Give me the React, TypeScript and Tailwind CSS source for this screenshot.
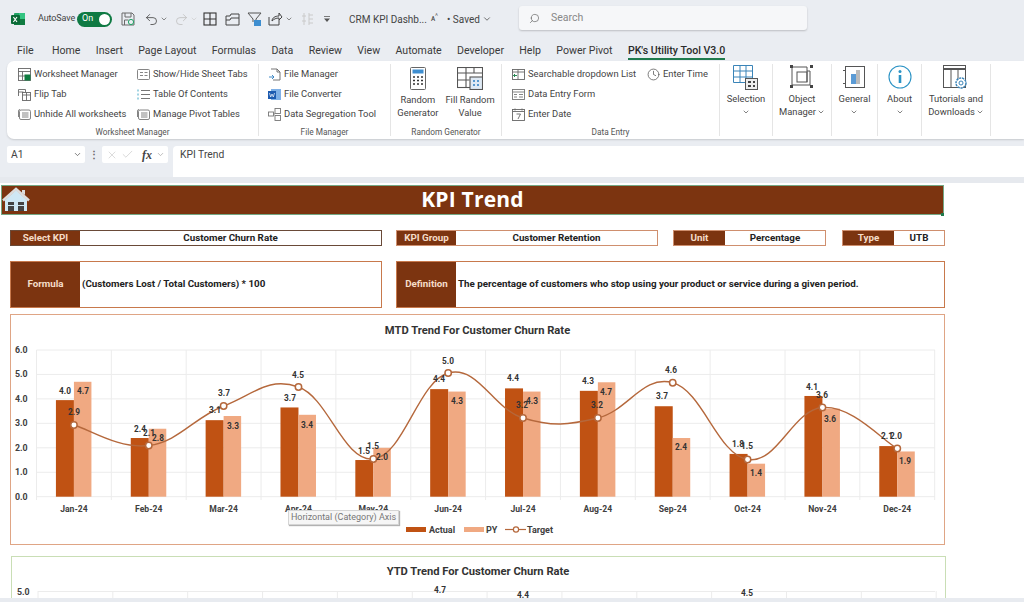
import type { ReactNode } from "react";
import { ChevronDown, Search, X, Check, Undo2, Redo2, Clock } from "lucide-react";

const sans = "font-['Roboto','Noto_Sans',sans-serif]";

const tabs = ["Home", "Insert", "Page Layout", "Formulas", "Data", "Review", "View", "Automate", "Developer", "Help", "Power Pivot"];

// page coordinates, the svg viewBox starts at the panel's top left corner
const months = [
  { m: "Jan-24", a: 3.95, p: 4.7, t: 425, labels: [["4.0", 65, 391], ["4.7", 83, 391], ["2.9", 74, 412]] },
  { m: "Feb-24", a: 2.4, p: 2.78, t: 445.5, labels: [["2.4", 140, 429], ["2.1", 149, 433], ["2.8", 158, 438]] },
  { m: "Mar-24", a: 3.13, p: 3.3, t: 406, labels: [["3.1", 215, 410], ["3.7", 224, 393], ["3.3", 233, 426]] },
  { m: "Apr-24", a: 3.65, p: 3.35, t: 387, labels: [["3.7", 290, 397.5], ["4.5", 298, 374.7], ["3.4", 307, 425]] },
  { m: "May-24", a: 1.5, p: 2.0, t: 459, labels: [["1.5", 364, 451], ["1.5", 373, 446], ["2.0", 382, 457]] },
  { m: "Jun-24", a: 4.4, p: 4.3, t: 373, labels: [["4.4", 439, 379], ["5.0", 448, 361], ["4.3", 457, 401]] },
  { m: "Jul-24", a: 4.43, p: 4.3, t: 418, labels: [["4.4", 513, 378], ["3.2", 522, 405], ["4.3", 532, 401]] },
  { m: "Aug-24", a: 4.33, p: 4.68, t: 418, labels: [["4.3", 588, 381], ["3.2", 597, 405], ["4.7", 606, 392]] },
  { m: "Sep-24", a: 3.7, p: 2.4, t: 382.7, labels: [["3.7", 662, 396], ["4.6", 671, 370], ["2.4", 681, 447]] },
  { m: "Oct-24", a: 1.75, p: 1.35, t: 459.5, labels: [["1.8", 738, 444], ["1.5", 747, 446], ["1.4", 756, 473]] },
  { m: "Nov-24", a: 4.12, p: 3.6, t: 407.5, labels: [["4.1", 812, 387], ["3.6", 822, 394.7], ["3.6", 830, 419]] },
  { m: "Dec-24", a: 2.07, p: 1.85, t: 448.5, labels: [["2.1", 887, 436], ["2.0", 896, 436], ["1.9", 905, 461]] },
];

const left = 36.5;
const catW = 74.85;
const y0 = 496.7;
const unit = 24.45;
const cx = (i: number) => left + catW * (i + 0.5);

function smoothPath(pts: number[][]) {
  let d = `M${pts[0][0]} ${pts[0][1]}`;
  for (let i = 0; i < pts.length - 1; i++) {
    const p0 = pts[Math.max(i - 1, 0)];
    const p1 = pts[i];
    const p2 = pts[i + 1];
    const p3 = pts[Math.min(i + 2, pts.length - 1)];
    const k = 0.2;
    d += ` C${p1[0] + (p2[0] - p0[0]) * k} ${p1[1] + (p2[1] - p0[1]) * k} ${p2[0] - (p3[0] - p1[0]) * k} ${p2[1] - (p3[1] - p1[1]) * k} ${p2[0]} ${p2[1]}`;
  }
  return d;
}

function MtdChart() {
  const pts = months.map((d, i) => [cx(i), d.t]);
  return (
    <svg viewBox="11 315 933 229" className={`block w-[933px] h-[229px] ${sans}`}>
      <text x="477.5" y="334" textAnchor="middle" fontSize="11.2" fontWeight="700" fill="#333">MTD Trend For Customer Churn Rate</text>
      {[0, 1, 2, 3, 4, 5, 6].map((v) => (
        <g key={v}>
          <line x1={left} x2={935} y1={y0 - v * unit} y2={y0 - v * unit} stroke="#ececec" />
          <text x="15" y={y0 - v * unit + 3} fontSize="8.8" fontWeight="700" fill="#404040">{v.toFixed(1)}</text>
        </g>
      ))}
      {[...Array(13).keys()].map((i) => (
        <line key={i} x1={left + catW * i} x2={left + catW * i} y1={350} y2={500} stroke="#ececec" />
      ))}
      {months.map((d, i) => (
        <g key={d.m}>
          <rect x={cx(i) - 18} y={y0 - d.a * unit} width="18" height={d.a * unit} fill="#c05213" />
          <rect x={cx(i)} y={y0 - d.p * unit} width="17.5" height={d.p * unit} fill="#f0a982" />
          <text x={cx(i)} y="512" textAnchor="middle" fontSize="8.6" fontWeight="700" fill="#404040">{d.m}</text>
        </g>
      ))}
      <path d={smoothPath(pts)} fill="none" stroke="#b5683c" strokeWidth="1.4" />
      {pts.map((p, i) => (
        <circle key={i} cx={p[0]} cy={p[1]} r="3.2" fill="#fff" stroke="#b5683c" strokeWidth="1.5" />
      ))}
      {months.flatMap((d) =>
        d.labels.map((l, j) => (
          <text key={d.m + j} x={l[1]} y={(l[2] as number) + 3} textAnchor="middle" fontSize="8.3" fontWeight="700" fill="#333">{l[0]}</text>
        ))
      )}
      <rect x="406" y="527" width="20" height="5" fill="#c05213" />
      <text x="429" y="532.5" fontSize="9" fontWeight="700" fill="#404040">Actual</text>
      <rect x="464" y="527" width="20" height="5" fill="#f0a982" />
      <text x="486" y="532.5" fontSize="9" fontWeight="700" fill="#404040">PY</text>
      <line x1="505" x2="526" y1="529.5" y2="529.5" stroke="#b5683c" strokeWidth="1.2" />
      <circle cx="516" cy="529.5" r="2.6" fill="#fff" stroke="#b5683c" strokeWidth="1.2" />
      <text x="527" y="532.5" fontSize="9" fontWeight="700" fill="#404040">Target</text>
    </svg>
  );
}

function YtdChart() {
  return (
    <svg viewBox="12 557 933 60" className={`block w-[933px] h-[60px] ${sans}`}>
      <text x="478" y="575" textAnchor="middle" fontSize="11.2" fontWeight="700" fill="#333">YTD Trend For Customer Churn Rate</text>
      <line x1={38} x2={935} y1="591.5" y2="591.5" stroke="#ececec" />
      {[...Array(13).keys()].map((i) => (
        <line key={i} x1={38 + catW * i} x2={38 + catW * i} y1={591} y2={617} stroke="#ececec" />
      ))}
      <text x="17" y="594.5" fontSize="8.8" fontWeight="700" fill="#404040">5.0</text>
      <text x="440" y="593" textAnchor="middle" fontSize="8.3" fontWeight="700" fill="#333">4.7</text>
      <text x="523" y="597.5" textAnchor="middle" fontSize="8.3" fontWeight="700" fill="#333">4.4</text>
      <text x="747" y="596" textAnchor="middle" fontSize="8.3" fontWeight="700" fill="#333">4.5</text>
    </svg>
  );
}

function ExcelLogo() {
  return (
    <svg viewBox="0 0 14 14" className="w-[14px] h-[14px]">
      <rect x="3" y="1" width="11" height="12" rx="1" fill="#21a366" />
      <rect x="8" y="1" width="6" height="6" fill="#33c481" />
      <rect x="3" y="7" width="11" height="6" fill="#107c41" />
      <rect x="0" y="3" width="9" height="9" rx="1" fill="#0b6a37" />
      <path d="M2.4 5l3.6 5M6 5l-3.6 5" stroke="#fff" strokeWidth="1.1" />
    </svg>
  );
}

function QatGrid() {
  return (
    <svg viewBox="0 0 14 14" className="w-[14px] h-[14px]" fill="none" stroke="#333" strokeWidth="1.1">
      <rect x="1" y="1" width="12" height="12" />
      <path d="M7 1v12M1 7h12" />
    </svg>
  );
}

function TitleBar() {
  return (
    <div className="h-[36px] flex items-center pl-[11px] pt-[2px] text-[#444]">
      <ExcelLogo />
      <span className="ml-[13px] w-[34px] text-[9px] tracking-[-0.1px] whitespace-nowrap">AutoSave</span>
      <span className="ml-[5px] w-[35px] h-[15px] rounded-full bg-[#0f7a43] flex items-center justify-between pl-[5px] pr-[2px] text-white text-[9px]">
        On
        <span className="w-[11px] h-[11px] rounded-full bg-white" />
      </span>
      <svg viewBox="0 0 14 14" className="ml-[9px] w-[14px] h-[14px]" fill="none" stroke="#6a6a6a" strokeWidth="1">
        <path d="M1 1h10l2 2v10H1z" />
        <path d="M4 1v4h6V1M3.5 13V8h4" />
        <circle cx="10" cy="10" r="2.6" stroke="#21a366" />
      </svg>
      <Undo2 className="ml-[9px] w-[15px] h-[15px] text-[#505050]" strokeWidth={1.4} />
      <ChevronDown className="ml-[1px] w-[8px] h-[8px] text-[#555]" />
      <Redo2 className="ml-[6px] w-[15px] h-[15px] text-[#c2c2c2]" strokeWidth={1.4} />
      <ChevronDown className="ml-[1px] w-[8px] h-[8px] text-[#ccc]" />
      <span className="ml-[5px]"><QatGrid /></span>
      <svg viewBox="0 0 15 13" className="ml-[8px] w-[15px] h-[13px]" fill="none" stroke="#444" strokeWidth="1">
        <path d="M1 12V3h4l1-2h8v11z" />
        <path d="M1 7h4l1-2h8" />
      </svg>
      <svg viewBox="0 0 15 15" className="ml-[7px] w-[15px] h-[15px]" fill="none" stroke="#555" strokeWidth="1">
        <path d="M1 1h13L9 7v4" />
        <path d="M1 1l5 6v3" />
        <rect x="7" y="8" width="7" height="6" fill="#3e8ed0" stroke="none" />
      </svg>
      <svg viewBox="0 0 15 14" className="ml-[6px] w-[15px] h-[14px]" fill="none" stroke="#444" strokeWidth="1">
        <path d="M1 5v8h10V8" />
        <path d="M4 9c0-3 3-5 7-5V1l3 4-3 3V6c-3 0-5 1-7 3z" />
      </svg>
      <ChevronDown className="ml-[2px] w-[8px] h-[8px] text-[#555]" />
      <svg viewBox="0 0 13 14" className="ml-[8px] w-[13px] h-[14px]" fill="none" stroke="#cacaca" strokeWidth="1">
        <path d="M3 1v12M1 4h4M1 9h4M8 1v12M8 3h4M8 7h4M8 11h4" />
      </svg>
      <svg viewBox="0 0 8 8" className="ml-[9px] w-[8px] h-[8px]" fill="#555">
        <path d="M1 1h6v.8H1zM1 3.5h6L4 7z" />
      </svg>
      <span className="ml-[18px] w-[71px] text-[10px] whitespace-nowrap">CRM KPI Dashb...</span>
      <span className="ml-[11px] w-[10px] text-[8px] leading-none">ᴀ<sup>ᴬ</sup></span>
      <span className="ml-[6px] w-[34px] text-[10px] whitespace-nowrap">• Saved</span>
      <ChevronDown className="ml-[1px] w-[10px] h-[10px] text-[#555]" />
      <div className="ml-[27px] w-[288px] h-[24px] -mt-[2px] bg-[#f6f7f9] rounded-[3px] shadow-[0_1px_2px_rgba(0,0,0,0.2)] flex items-center pl-[10px] text-[10.5px] text-[#888]">
        <Search className="w-[11px] h-[11px] -scale-x-100 text-[#666]" strokeWidth={1.5} />
        <span className="ml-[11px]">Search</span>
      </div>
    </div>
  );
}

function TabRow() {
  return (
    <div className="h-[25px] flex items-center gap-[15.3px] pl-[17px] pt-[4px] text-[10.6px] text-[#3a3a3a]">
      <span className="mr-[3px]">File</span>
      {tabs.map((t) => (
        <span key={t}>{t}</span>
      ))}
      <span className="relative font-medium text-[#2b2b2b]">
        PK's Utility Tool V3.0
        <span className="absolute left-0 right-0 -bottom-[2px] h-[2px] bg-[#1f7a4d]" />
      </span>
    </div>
  );
}

function MiniIcon({ kind }: { kind: string }) {
  if (kind === "word") {
    return (
      <svg viewBox="0 0 13 13" className="w-[13px] h-[13px] shrink-0">
        <rect x="3" y="1" width="10" height="11" fill="#7fb0e6" />
        <rect x="0" y="3" width="8" height="8" fill="#1d5bb0" />
        <path d="M1.5 5l1.2 4 1.3-3 1.3 3 1.2-4" stroke="#fff" strokeWidth=".7" fill="none" />
      </svg>
    );
  }
  if (kind === "file") {
    return (
      <svg viewBox="0 0 13 13" className="w-[13px] h-[13px] shrink-0" fill="none" stroke="#666" strokeWidth=".9">
        <path d="M3 1h6l3 3v8H5M9 1v3h3" />
        <path d="M1 9h5M4 7l2 2-2 2" stroke="#2f7fc1" />
      </svg>
    );
  }
  if (kind === "list") {
    return (
      <svg viewBox="0 0 13 13" className="w-[13px] h-[13px] shrink-0" fill="none" stroke="#666" strokeWidth=".9">
        <path d="M4 2.5h9M4 6.5h9M4 10.5h9" />
        <path d="M1 1.5v2M1 5.5v2M1 9.5v2" stroke="#2f9fc1" />
      </svg>
    );
  }
  if (kind === "sheet") {
    return (
      <svg viewBox="0 0 13 13" className="w-[13px] h-[13px] shrink-0" fill="none" stroke="#666" strokeWidth=".9">
        <rect x=".5" y=".5" width="12" height="12" />
        <path d="M.5 3.5h12M4.5 3.5v9M.5 8h7" />
        <rect x="6.5" y="6.5" width="6" height="6" fill="#107c41" stroke="none" />
      </svg>
    );
  }
  if (kind === "flip") {
    return (
      <svg viewBox="0 0 13 13" className="w-[13px] h-[13px] shrink-0" fill="none" stroke="#666" strokeWidth=".9">
        <path d="M.5 8V1.5h7V4M.5 4h5" />
        <rect x="4.5" y="4.5" width="8" height="8" />
        <path d="M4.5 7h8M8.5 4.5v8" />
      </svg>
    );
  }
  if (kind === "tabs") {
    return (
      <svg viewBox="0 0 13 13" className="w-[13px] h-[13px] shrink-0" fill="none" stroke="#777" strokeWidth=".9">
        <rect x=".5" y="1.5" width="12" height="10" rx="1" />
        <path d="M3 4.5h3M7.5 4.5h3M3 7.5h3M7.5 7.5h3" />
      </svg>
    );
  }
  if (kind === "seg") {
    return (
      <svg viewBox="0 0 13 13" className="w-[13px] h-[13px] shrink-0" fill="none" stroke="#777" strokeWidth=".9">
        <rect x="7" y=".5" width="5.5" height="5" />
        <rect x=".5" y="4" width="5" height="4" />
        <rect x="7" y="7.5" width="5.5" height="5" />
        <path d="M5.5 6H7" />
      </svg>
    );
  }
  if (kind === "form") {
    return (
      <svg viewBox="0 0 13 13" className="w-[13px] h-[13px] shrink-0" fill="none" stroke="#777" strokeWidth=".9">
        <rect x=".5" y="1.5" width="12" height="10" />
        <path d="M.5 4h12M2 6.5h3M2 9h3M7 6.5h4M7 9h4" />
      </svg>
    );
  }
  if (kind === "date") {
    return (
      <svg viewBox="0 0 13 13" className="w-[13px] h-[13px] shrink-0" fill="none" stroke="#666" strokeWidth=".9">
        <rect x=".5" y="1.5" width="12" height="11" />
        <path d="M.5 3.5h12M3 .5v2M10 .5v2M4.5 6h4l-2.5 5" />
      </svg>
    );
  }
  if (kind === "dropdown") {
    return (
      <svg viewBox="0 0 13 13" className="w-[13px] h-[13px] shrink-0" fill="none" stroke="#666" strokeWidth=".9">
        <rect x=".5" y="1.5" width="12" height="10" />
        <path d="M.5 4h12M6 1.5v10" />
        <path d="M5 7.5H1.5M3 6L1.5 7.5 3 9" stroke="#107c41" />
      </svg>
    );
  }
  // pivot / unhide style, a rounded panel with lines
  return (
    <svg viewBox="0 0 13 13" className="w-[13px] h-[13px] shrink-0" fill="none" stroke="#777" strokeWidth=".9">
      <rect x="1.5" y="2" width="11" height="9.5" rx="1.5" />
      <path d="M.5 9V3a1.5 1.5 0 0 1 1.5-1.5M4 5h6.5M4 7h6.5M4 9h6.5" />
    </svg>
  );
}

function RibbonItem({ kind, label, className }: { kind: string; label: string; className?: string }) {
  return (
    <div className={`flex items-center gap-[3px] h-[20px] whitespace-nowrap ${className ?? ""}`}>
      <MiniIcon kind={kind} />
      <span>{label}</span>
    </div>
  );
}

function GroupLabel({ children }: { children: string }) {
  return <div className="absolute -bottom-[2px] left-0 right-0 text-center text-[8.3px] text-[#555]">{children}</div>;
}

function TallButton({ label, icon, caret }: { label: string[]; icon: ReactNode; caret?: boolean }) {
  return (
    <div className="flex flex-col items-center text-center leading-[12.5px]">
      <div className="h-[26px] flex items-center">{icon}</div>
      <div className="mt-[3px]">
        {label.map((l, i) => (
          <div key={l} className="flex items-center justify-center whitespace-nowrap">
            {l}
            {caret && i === label.length - 1 && <ChevronDown className="ml-[1px] w-[8px] h-[8px]" />}
          </div>
        ))}
        {!caret && (
          <div className="flex justify-center">
            <ChevronDown className="w-[8px] h-[8px] mt-[2px]" />
          </div>
        )}
      </div>
    </div>
  );
}

function Ribbon() {
  return (
    <div className="ml-[7px] h-[78px] bg-white rounded-l-[7px] shadow-[0_1px_2px_rgba(0,0,0,0.15)] flex text-[9.4px] text-[#444]">
      <div className="relative w-[252px] shrink-0 border-r border-[#e5e5e5] my-[3px] pl-[11px] flex gap-[2px]">
        <div className="w-[117px]">
          <RibbonItem kind="sheet" label="Worksheet Manager" />
          <RibbonItem kind="flip" label="Flip Tab" />
          <RibbonItem kind="stack" label="Unhide All worksheets" />
        </div>
        <div>
          <RibbonItem kind="tabs" label="Show/Hide Sheet Tabs" />
          <RibbonItem kind="list" label="Table Of Contents" />
          <RibbonItem kind="stack" label="Manage Pivot Tables" />
        </div>
        <GroupLabel>Worksheet Manager</GroupLabel>
      </div>
      <div className="relative w-[132px] shrink-0 border-r border-[#e5e5e5] my-[3px] pl-[9px]">
        <RibbonItem kind="file" label="File Manager" />
        <RibbonItem kind="word" label="File Converter" />
        <RibbonItem kind="seg" label="Data Segregation Tool" />
        <GroupLabel>File Manager</GroupLabel>
      </div>
      <div className="relative w-[111px] shrink-0 border-r border-[#e5e5e5] my-[3px] pt-[3px] flex justify-center gap-[7px] leading-[12.5px]">
        <div className="flex flex-col items-center">
          <svg viewBox="0 0 16 23" className="w-[16px] h-[23px]" fill="none" stroke="#666" strokeWidth="1">
            <rect x=".5" y=".5" width="15" height="22" rx="1" />
            <rect x="2.5" y="2.5" width="11" height="4" fill="#3e8ed0" stroke="none" />
            <path d="M3 10h2M7 10h2M11 10h2M3 13.5h2M7 13.5h2M11 13.5h2M3 17h2M7 17h2M11 17h2" stroke="#333" strokeWidth="1.5" />
          </svg>
          <div className="mt-[4px] text-center">Random<br />Generator</div>
        </div>
        <div className="flex flex-col items-center">
          <svg viewBox="0 0 26 23" className="w-[26px] h-[23px]" fill="none" stroke="#555" strokeWidth="1.1">
            <rect x=".5" y=".5" width="25" height="20" />
            <path d="M.5 6h25M9 .5v20M17 .5v6M.5 13h12" />
            <rect x="13" y="10" width="12.5" height="12.5" fill="#dfeaf5" stroke="#555" />
            <path d="M16 14h2M20 14h2M16 18h2M20 18h2" stroke="#2f7fc1" strokeWidth="1.6" />
          </svg>
          <div className="mt-[4px] text-center">Fill Random<br />Value</div>
        </div>
        <GroupLabel>Random Generator</GroupLabel>
      </div>
      <div className="relative w-[218px] shrink-0 border-r border-[#e5e5e5] my-[3px] pl-[10px] flex">
        <div className="w-[135px]">
          <RibbonItem kind="dropdown" label="Searchable dropdown List" />
          <RibbonItem kind="form" label="Data Entry Form" />
          <RibbonItem kind="date" label="Enter Date" />
        </div>
        <div className="flex items-center gap-[3px] h-[20px] whitespace-nowrap">
          <Clock className="w-[13px] h-[13px] text-[#555]" strokeWidth={1.4} />
          <span>Enter Time</span>
        </div>
        <GroupLabel>Data Entry</GroupLabel>
      </div>
      <div className="w-[53px] shrink-0 border-r border-[#e5e5e5] my-[3px] flex justify-center">
        <TallButton
          label={["Selection"]}
          icon={
            <svg viewBox="0 0 25 25" className="w-[25px] h-[25px]" fill="none" stroke="#3a84b8" strokeWidth="1">
              <path d="M.5 .5h19v17H.5zM.5 6h19M.5 12h19M7 .5v17M13 .5v17" />
              <rect x="12.5" y="13.5" width="12" height="11" fill="#eee" stroke="#555" />
              <path d="M15 17h3M20 17h2M15 21h3M20 21h2" stroke="#444" strokeWidth="2" />
            </svg>
          }
        />
      </div>
      <div className="w-[59px] shrink-0 border-r border-[#e5e5e5] my-[3px] flex justify-center">
        <TallButton
          caret
          label={["Object", "Manager"]}
          icon={
            <svg viewBox="0 0 24 24" className="w-[24px] h-[24px]" fill="none" stroke="#555" strokeWidth="1">
              <path d="M2 2h15v15M2 2v18h18V6h-3" />
              <rect x="7" y="7" width="10" height="10" />
              <path d="M0 0h3v3H0zM20 0h3v3h-3zM0 20h3v3H0zM20 20h3v3h-3z" fill="#444" stroke="none" />
            </svg>
          }
        />
      </div>
      <div className="w-[46px] shrink-0 border-r border-[#e5e5e5] my-[3px] flex justify-center">
        <TallButton
          label={["General"]}
          icon={
            <svg viewBox="0 0 22 22" className="w-[22px] h-[22px]" fill="none" stroke="#555" strokeWidth="1">
              <rect x="2.5" y=".5" width="19" height="21" />
              <path d="M2.5 3v3M2.5 16v3M0 4.5h3M0 17.5h3" />
              <rect x="8" y="8" width="5" height="10" fill="#5b9bd5" stroke="none" />
              <rect x="13" y="4" width="4" height="14" fill="#bbb" stroke="none" />
            </svg>
          }
        />
      </div>
      <div className="w-[44px] shrink-0 border-r border-[#e5e5e5] my-[3px] flex justify-center">
        <TallButton
          label={["About"]}
          icon={
            <svg viewBox="0 0 24 24" className="w-[24px] h-[24px]" fill="none" stroke="#2b93c5" strokeWidth="1.1">
              <circle cx="12" cy="12" r="11" />
              <path d="M12 10v8" strokeWidth="2.6" />
              <circle cx="12" cy="6.5" r="1.5" fill="#2b93c5" stroke="none" />
            </svg>
          }
        />
      </div>
      <div className="w-[69px] shrink-0 border-r border-[#e5e5e5] my-[3px] flex justify-center">
        <TallButton
          caret
          label={["Tutorials and", "Downloads"]}
          icon={
            <svg viewBox="0 0 25 24" className="w-[25px] h-[24px]" fill="none" stroke="#555" strokeWidth="1">
              <rect x=".5" y=".5" width="22" height="22" />
              <path d="M.5 4h22" strokeWidth="2" />
              <path d="M8 4v18.5M15 4v10" />
              <circle cx="18" cy="18" r="5" fill="#fff" stroke="#3a84b8" strokeWidth="1.5" strokeDasharray="2.2 .8" />
              <circle cx="18" cy="18" r="2" stroke="#3a84b8" />
            </svg>
          }
        />
      </div>
    </div>
  );
}

function FormulaBar() {
  return (
    <div className="h-[39px] pt-[7px] pl-[7px] flex items-start text-[10.3px] text-[#444]">
      <div className="w-[78px] h-[17px] bg-white rounded-[2px] flex items-center justify-between pl-[4px] pr-[3px]">
        A1
        <ChevronDown className="w-[9px] h-[9px] text-[#555]" />
      </div>
      <div className="w-[17px] h-[17px] flex items-center justify-center font-bold text-[#666]">⋮</div>
      <div className="w-[66px] h-[17px] bg-white rounded-[2px] flex items-center pl-[4px] text-[#c4c4c4]">
        <X className="w-[12px] h-[12px]" strokeWidth={1.2} />
        <Check className="ml-[3px] w-[13px] h-[13px]" strokeWidth={1.2} />
        <span className="ml-[8px] font-['Liberation_Serif',serif] italic font-bold text-[12px] text-[#444]">fx</span>
        <ChevronDown className="ml-[4px] w-[9px] h-[9px] text-[#aaa]" />
      </div>
      <div className="ml-[5px] flex-1 h-[32px] bg-white rounded-tl-[4px] pl-[7px] pt-[1px] leading-[16px]">KPI Trend</div>
    </div>
  );
}

function Field({ label, value, w, lw, dark }: { label: string; value: string; w: string; lw: string; dark?: boolean }) {
  return (
    <div className={`${w} h-[16px] flex border ${dark ? "border-[#6a4a38]" : "border-[#cf8f6e]"}`}>
      <div className={`${lw} shrink-0 bg-[#7c3410] text-[#f5dcc8] flex items-center justify-center`}>{label}</div>
      <div className="flex-1 bg-white text-[#222] flex items-center justify-center">{value}</div>
    </div>
  );
}

function HouseIcon() {
  return (
    <svg viewBox="0 0 28 26" className="w-[28px] h-[26px]">
      <path d="M3 13L14 3l11 10v11H3z" fill="#cfe8f5" />
      <path d="M1 13.5L14 2l13 11.5" fill="none" stroke="#ddd" strokeWidth="2.5" />
      <path d="M20 3h3v5l-3-2z" fill="#ddd" />
      <rect x="6" y="15" width="6" height="9" fill="#444" />
      <rect x="16" y="15" width="6" height="9" fill="#444" />
      <rect x="6" y="18" width="6" height="1" fill="#cfe8f5" />
      <rect x="16" y="18" width="6" height="1" fill="#cfe8f5" />
    </svg>
  );
}

function Sheet() {
  return (
    <div className={`flex-1 min-h-0 overflow-hidden bg-white text-[9.8px] font-bold pt-[2px] ${sans}`}>
      <div className="relative ml-[1px] w-[943px] h-[30px] bg-[#7c3410] border border-[#74a885] flex items-center justify-center text-white text-[21px] font-['Open_Sans',sans-serif] tracking-[0.2px]">
        <span className="absolute left-0 top-[1px]"><HouseIcon /></span>
        KPI Trend
        <span className="absolute -right-[1px] -bottom-[2px] w-[3px] h-[3px] bg-[#1f7a4d]" />
      </div>
      <div className="mt-[15px] ml-[10px] flex">
        <Field dark label="Select KPI" value="Customer Churn Rate" w="w-[372px]" lw="w-[69px]" />
        <div className="w-[14px]" />
        <Field label="KPI Group" value="Customer Retention" w="w-[262px]" lw="w-[59px]" />
        <div className="w-[15px]" />
        <Field label="Unit" value="Percentage" w="w-[153px]" lw="w-[51px]" />
        <div className="w-[16px]" />
        <Field label="Type" value="UTB" w="w-[103px]" lw="w-[51px]" />
      </div>
      <div className="mt-[15px] ml-[10px] flex">
        <div className="w-[372px] h-[47px] flex border border-[#c8794c]">
          <div className="w-[69px] shrink-0 bg-[#7c3410] text-[#f5dcc8] flex items-center justify-center">Formula</div>
          <div className="flex-1 pl-[2px] text-[#222] flex items-center">(Customers Lost / Total Customers) * 100</div>
        </div>
        <div className="ml-[14px] w-[549px] h-[47px] flex border border-[#c8794c]">
          <div className="w-[59px] shrink-0 bg-[#7c3410] text-[#f5dcc8] flex items-center justify-center">Definition</div>
          <div className="flex-1 pl-[2px] text-[#222] flex items-center whitespace-nowrap">The percentage of customers who stop using your product or service during a given period.</div>
        </div>
      </div>
      <div className="relative mt-[6px] ml-[10px] w-[935px] h-[231px] border border-[#dfa585] bg-white">
        <MtdChart />
        <div className="absolute left-[277px] top-[195px] w-[111px] h-[15px] bg-[#f6f6f6] border border-[#d5d5d5] shadow-[1px_1px_1px_rgba(0,0,0,0.3)] flex items-center justify-center text-[9px] font-normal text-[#777] whitespace-nowrap">
          Horizontal (Category) Axis
        </div>
      </div>
      <div className="mt-[11px] ml-[11px] w-[935px] h-[80px] border border-[#c9deb5] bg-white">
        <YtdChart />
      </div>
    </div>
  );
}

export default function App() {
  return (
    <div className={`w-[1024px] h-[602px] overflow-hidden flex flex-col bg-[#eaedf2] ${sans}`}>
      <TitleBar />
      <TabRow />
      <Ribbon />
      <FormulaBar />
      <div className="h-[6px] bg-[#e6e9ee] -mt-[1px]" />
      <Sheet />
      <div className="h-[4px] bg-[#e8ebf0] shrink-0" />
    </div>
  );
}
